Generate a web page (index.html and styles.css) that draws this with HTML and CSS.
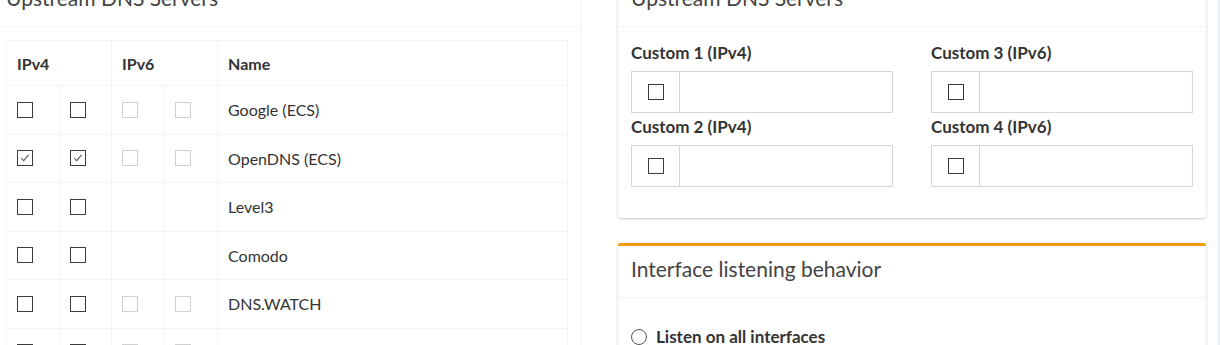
FILE: index.html
```html
<!DOCTYPE html>
<html lang="en">

<head>
  <meta charset="UTF-8" />
  <meta name="viewport" content="width=device-width, initial-scale=1.0" />
  <title>Settings - DNS</title>
  <link rel="stylesheet" href="styles.css">
</head>

<body>
  <div class="page">

    <!-- left column: preset upstream servers -->
    <div class="col-left">
      <div class="box box-plain">
        <div class="box-header">
          <h3 class="box-title">Upstream DNS Servers</h3>
        </div>
        <div class="box-body">
          <table class="dns-table">
            <colgroup>
              <col class="c-check">
              <col class="c-check2">
              <col class="c-check">
              <col class="c-check">
              <col>
            </colgroup>
            <thead>
              <tr>
                <th colspan="2">IPv4</th>
                <th colspan="2">IPv6</th>
                <th>Name</th>
              </tr>
            </thead>
            <tbody>
              <tr>
                <td><span class="cb"></span></td>
                <td><span class="cb"></span></td>
                <td><span class="cb cb-off"></span></td>
                <td><span class="cb cb-off"></span></td>
                <td>Google (ECS)</td>
              </tr>
              <tr>
                <td><span class="cb"><svg viewBox="0 0 16 16"><path d="M3.5 8 L6.5 11 L12 4.5" /></svg></span></td>
                <td><span class="cb"><svg viewBox="0 0 16 16"><path d="M3.5 8 L6.5 11 L12 4.5" /></svg></span></td>
                <td><span class="cb cb-off"></span></td>
                <td><span class="cb cb-off"></span></td>
                <td>OpenDNS (ECS)</td>
              </tr>
              <tr>
                <td><span class="cb"></span></td>
                <td><span class="cb"></span></td>
                <td></td>
                <td></td>
                <td>Level3</td>
              </tr>
              <tr>
                <td><span class="cb"></span></td>
                <td><span class="cb"></span></td>
                <td></td>
                <td></td>
                <td>Comodo</td>
              </tr>
              <tr>
                <td><span class="cb"></span></td>
                <td><span class="cb"></span></td>
                <td><span class="cb cb-off"></span></td>
                <td><span class="cb cb-off"></span></td>
                <td>DNS.WATCH</td>
              </tr>
              <tr>
                <td><span class="cb"></span></td>
                <td><span class="cb"></span></td>
                <td><span class="cb cb-off"></span></td>
                <td><span class="cb cb-off"></span></td>
                <td>Quad9 (filtered, DNSSEC)</td>
              </tr>
            </tbody>
          </table>
        </div>
      </div>
    </div>

    <!-- right column: custom servers + interface settings -->
    <div class="col-right">
      <div class="box">
        <div class="box-header">
          <h3 class="box-title">Upstream DNS Servers</h3>
        </div>
        <div class="box-body custom-grid">
          <div class="form-group">
            <label>Custom 1 (IPv4)</label>
            <div class="input-group">
              <div class="addon"><span class="cb"></span></div>
              <input type="text" class="form-control">
            </div>
          </div>
          <div class="form-group">
            <label>Custom 3 (IPv6)</label>
            <div class="input-group">
              <div class="addon"><span class="cb"></span></div>
              <input type="text" class="form-control">
            </div>
          </div>
          <div class="form-group">
            <label>Custom 2 (IPv4)</label>
            <div class="input-group">
              <div class="addon"><span class="cb"></span></div>
              <input type="text" class="form-control">
            </div>
          </div>
          <div class="form-group">
            <label>Custom 4 (IPv6)</label>
            <div class="input-group">
              <div class="addon"><span class="cb"></span></div>
              <input type="text" class="form-control">
            </div>
          </div>
        </div>
      </div>

      <div class="box box-warning">
        <div class="box-header">
          <h3 class="box-title">Interface listening behavior</h3>
        </div>
        <div class="box-body listen-body">
          <div class="radio-row">
            <span class="radio"></span>
            <strong>Listen on all interfaces</strong>
          </div>
        </div>
      </div>
    </div>

    <div class="edge"></div>
  </div>
</body>

</html>
```

FILE: styles.css
```css
body {
  margin: 0;
  background: #fff;
  font-family: Lato, "Liberation Sans", sans-serif;
  font-size: 16px;
  color: #333;
  overflow: hidden;
}

.page {
  display: flex;
  margin-top: -28px;
  min-height: 400px;
}

.col-left {
  flex: none;
  width: 582px;
  border-right: 1px solid #f4f4f4;
  box-sizing: border-box;
}

.col-right {
  flex: none;
  width: 588px;
  margin-left: 36px;
}

.edge {
  flex: none;
  width: 2px;
  margin-left: 12px;
  background: #ecf0f5;
}

.box {
  background: #fff;
  border-top: 3px solid #d2d6de;
  border-radius: 3px;
  box-shadow: 0 0 1px rgba(0, 0, 0, .125), 0 1px 3px rgba(0, 0, 0, .2);
  margin-bottom: 25px;
}

.box-plain {
  box-shadow: none;
  border-radius: 0;
}

.box-warning {
  border-top-color: #f39c12;
}

.box-header {
  padding: 11px 13px 16px;
  border-bottom: 1px solid #f4f4f4;
}

.box-plain .box-header {
  padding-left: 6px;
}

.box-title {
  margin: 0;
  font-size: 21px;
  line-height: 24px;
  font-weight: 400;
  color: #444;
}

.box-plain .box-body {
  padding: 13px 13px 0 6px;
}

/* table of preset servers */
.dns-table {
  width: 562px;
  table-layout: fixed;
  border-collapse: collapse;
  border: 1px solid #f4f4f4;
}

.c-check {
  width: 53px;
}

.c-check2 {
  width: 52px;
}

.dns-table th,
.dns-table td {
  border: 1px solid #f4f4f4;
  padding: 0 10px;
  text-align: left;
  vertical-align: middle;
}

.dns-table th {
  height: 44px;
  font-weight: 700;
}

.dns-table td {
  height: 47.5px;
}

.cb {
  display: block;
  width: 16px;
  height: 16px;
  box-sizing: border-box;
  border: 1px solid #3b3b3b;
  background: #fff;
}

.cb-off {
  border-color: #d0d0d0;
}

.cb svg {
  display: block;
  width: 14px;
  height: 14px;
}

.cb path {
  fill: none;
  stroke: #555;
  stroke-width: 1.2;
}

/* custom upstream inputs */
.custom-grid {
  display: grid;
  grid-template-columns: 262px 262px;
  column-gap: 38px;
  row-gap: 4px;
  padding: 16px 13px 31px;
}

.form-group label {
  display: block;
  font-size: 17px;
  font-weight: 700;
  line-height: 20px;
  margin-bottom: 8px;
}

.input-group {
  display: flex;
  height: 42px;
  box-sizing: border-box;
  border: 1px solid #d2d6de;
}

.addon {
  flex: none;
  width: 47px;
  border-right: 1px solid #d2d6de;
  display: flex;
  align-items: center;
  justify-content: center;
}

.form-control {
  flex: 1;
  min-width: 0;
  border: none;
  outline: none;
  padding: 0 12px;
  font: inherit;
}

/* interface listening */
.listen-body {
  padding: 28px 13px;
}

.radio-row {
  display: flex;
  align-items: center;
  gap: 9px;
  font-size: 17px;
}

.radio {
  width: 16px;
  height: 16px;
  box-sizing: border-box;
  border: 1px solid #555;
  border-radius: 50%;
}
```
